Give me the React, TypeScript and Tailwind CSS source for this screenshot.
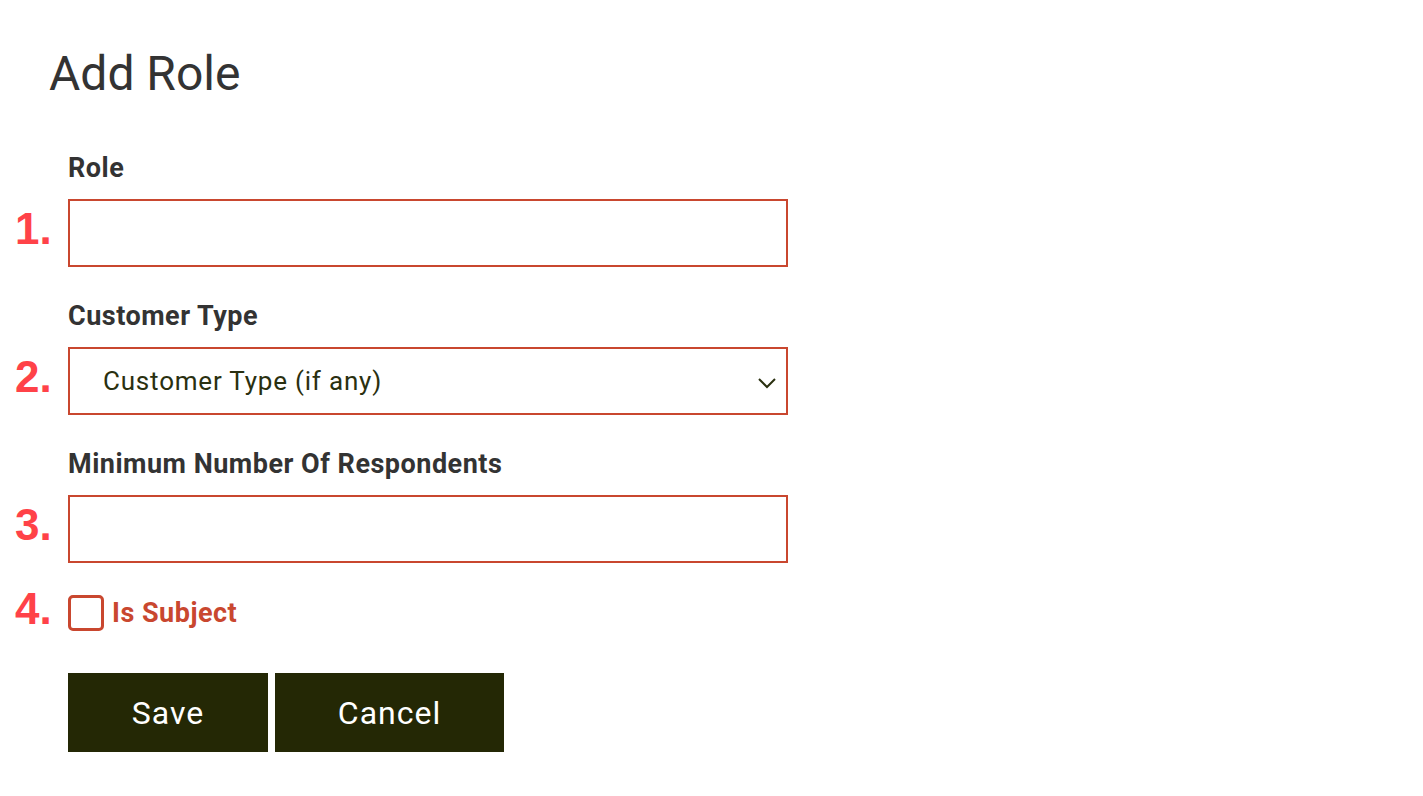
import { useState } from 'react'

const red = 'border-[#c9472f]'

function Num({ n }: { n: string }) {
  return (
    <span className="w-[68px] pl-[15px] mb-[8px] shrink-0 text-[#ff4248] text-[44px] font-bold leading-none" style={{ fontFamily: '"Liberation Sans", Arial, sans-serif' }}>
      {n}
    </span>
  )
}

export default function App() {
  const [subject, setSubject] = useState(false)

  return (
    <main className="min-h-screen bg-white text-[#333333]" style={{ fontFamily: 'Roboto, "Noto Sans", sans-serif' }}>
      <div className="pt-[44px]">
        <h1 className="pl-[49px] text-[48px] leading-[60px] font-normal text-[#333333]">Add Role</h1>

        <form className="mt-[48px]" onSubmit={e => e.preventDefault()}>
          {/* Role */}
          <label className="block pl-[68px] text-[27px] font-bold leading-[32px] tracking-[0.5px]">Role</label>
          <div className="flex items-center mt-[15px]">
            <Num n="1." />
            <input className={`w-[720px] h-[68px] border-2 ${red} px-4 text-[24px] outline-none`} />
          </div>

          {/* Customer Type */}
          <label className="block pl-[68px] mt-[33px] text-[27px] font-bold leading-[32px] tracking-[0.5px]">Customer Type</label>
          <div className="flex items-center mt-[15px]">
            <Num n="2." />
            <div className={`relative w-[720px] h-[68px] border-2 ${red} flex items-center`}>
              <span className="pl-[33px] text-[26px] tracking-[0.8px] text-[#2a3010]">Customer Type (if any)</span>
              <svg className="absolute right-[9px] top-[28px]" width="20" height="12" viewBox="0 0 20 12" fill="none">
                <path d="M2 2l8 8 8-8" stroke="#2a3010" strokeWidth="2" />
              </svg>
            </div>
          </div>

          {/* Minimum Number Of Respondents */}
          <label className="block pl-[68px] mt-[33px] text-[27px] font-bold leading-[32px] tracking-[0.5px]">Minimum Number Of Respondents</label>
          <div className="flex items-center mt-[15px]">
            <Num n="3." />
            <input className={`w-[720px] h-[68px] border-2 ${red} px-4 text-[24px] outline-none`} />
          </div>

          {/* Is Subject */}
          <div className="flex items-center mt-[24px]">
            <Num n="4." />
            <button
              type="button"
              onClick={() => setSubject(!subject)}
              className={`w-[36px] h-[36px] border-[3px] ${red} rounded-[5px] shrink-0`}
            />
            <span className="ml-[8px] text-[27px] font-bold tracking-[0.5px] text-[#c9472f]">Is Subject</span>
          </div>

          <div className="flex gap-[7px] pl-[68px] mt-[34px]">
            <button className="w-[200px] h-[79px] bg-[#242805] text-white text-[32px] tracking-[1px]">Save</button>
            <button type="button" className="w-[229px] h-[79px] bg-[#242805] text-white text-[32px] tracking-[1px]">Cancel</button>
          </div>
        </form>
      </div>
    </main>
  )
}
